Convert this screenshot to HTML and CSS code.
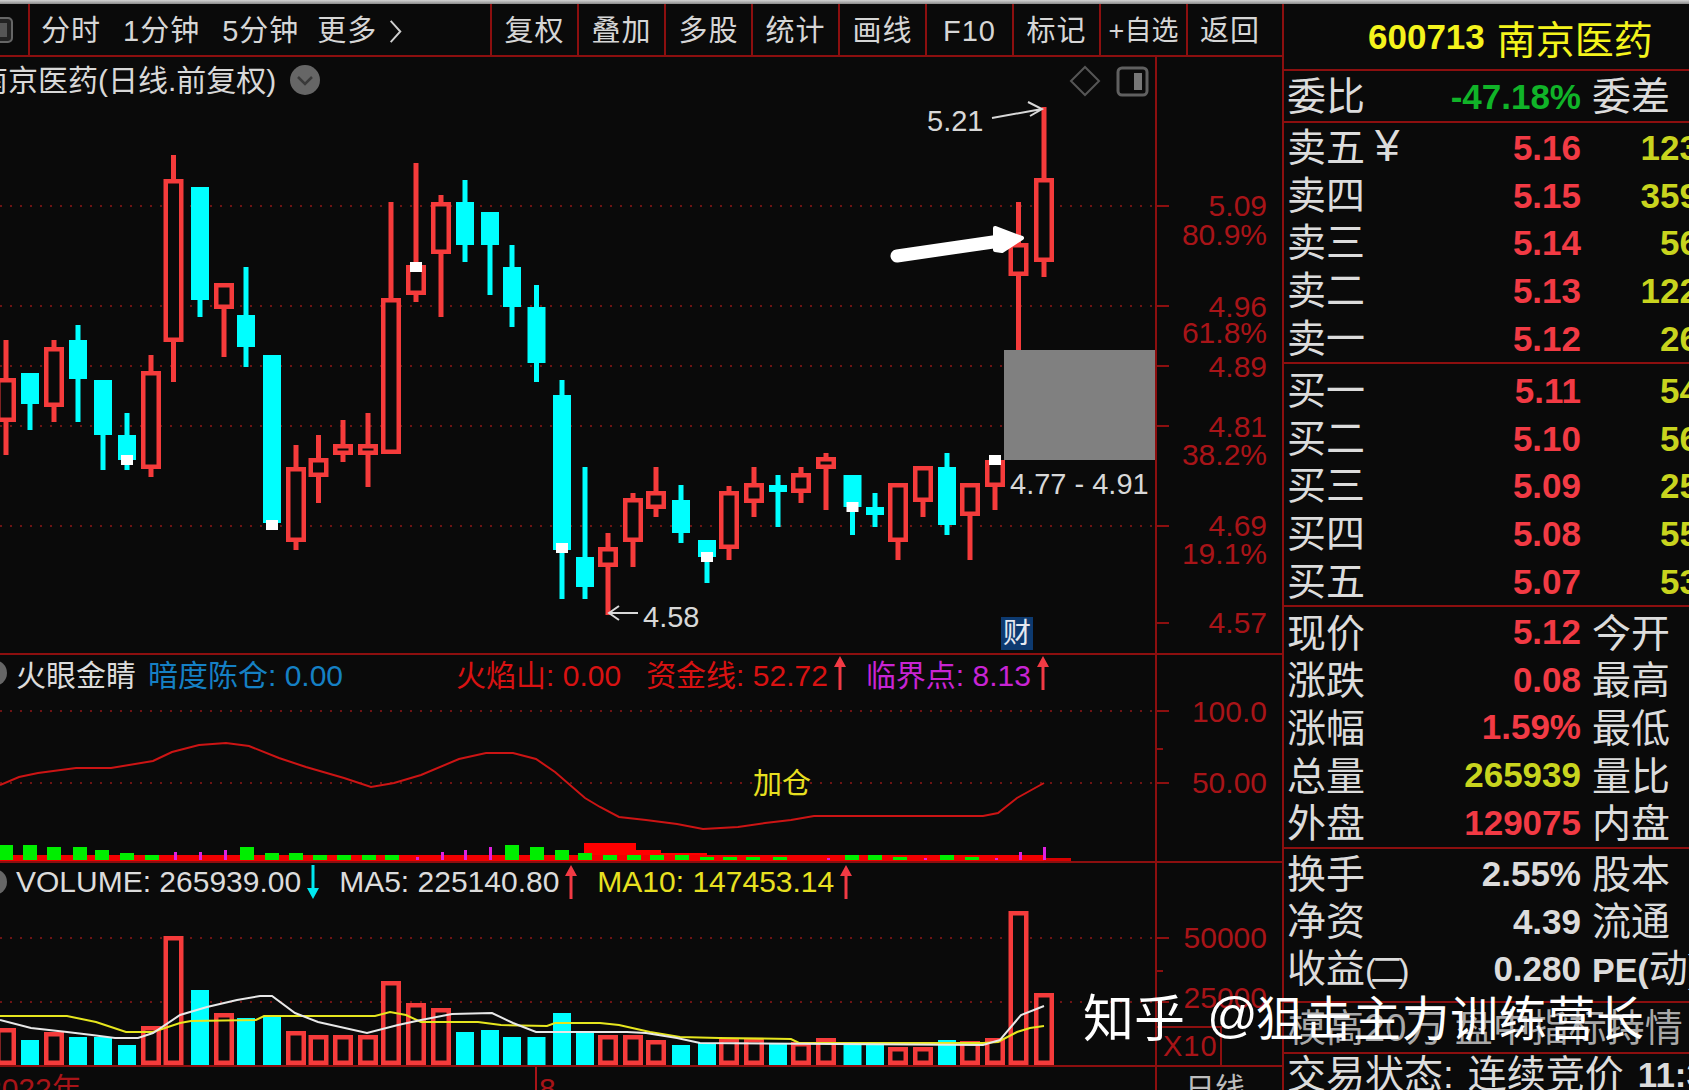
FILE: index.html
```html
<!DOCTYPE html>
<html lang="zh-CN">
<head>
  <meta charset="UTF-8">
  <title>南京医药 600713 日线</title>
  <link rel="stylesheet" href="styles.css">
</head>
<body>
  <div class="topline"></div>
  <div class="app">
    <div class="left">
      <div class="toolbar">
        <div class="tool-icon"><span class="tool-icon-box"></span></div>
        <div class="tabs">
          <span>分时</span>
          <span>1分钟</span>
          <span>5分钟</span>
          <span class="tab-more">更多 <svg class="more-arrow" viewBox="0 0 14 26"><path d="M2 2 L12 13 L2 24"/></svg></span>
        </div>
        <span class="tool-btn">复权</span>
        <span class="tool-btn">叠加</span>
        <span class="tool-btn">多股</span>
        <span class="tool-btn">统计</span>
        <span class="tool-btn">画线</span>
        <span class="tool-btn">F10</span>
        <span class="tool-btn">标记</span>
        <span class="tool-btn tight">+自选</span>
        <span class="tool-btn last">返回</span>
      </div>

      <div class="pane pane-main">
        <svg class="layer" id="mainLayer"></svg>
        <div class="plot">
          <div class="main-title">
            <span>南京医药(日线.前复权)</span>
            <span class="title-drop">
              <svg viewBox="0 0 30 30"><path d="M8 12 L15 19 L22 12"/></svg>
            </span>
          </div>
          <svg class="plot-icons" viewBox="-8 0 78 32">
            <path class="diamond" d="M-7 16 L7 2 L21 16 L7 30 Z"/>
            <rect class="panel-frame" x="40" y="3" width="29" height="27" rx="4"/>
            <rect class="panel-fill" x="56" y="8" width="8" height="17"/>
          </svg>
          <span class="cai-badge">财</span>
        </div>
        <div class="axis"></div>
      </div>

      <div class="pane pane-ind">
        <svg class="layer" id="indLayer"></svg>
        <div class="plot">
          <div class="legend legend-ind">
            <span class="legend-dot"></span>
            <span class="c-white">火眼金睛</span>
            <span class="c-blue close">暗度陈仓: 0.00</span>
            <span class="c-red far">火焰山: 0.00</span>
            <span class="c-red mid">资金线: 52.72</span>
            <svg class="arrow" viewBox="0 0 14 34"><path class="arrow-red" d="M7 0 L13 11 L8.5 11 L8.5 34 L5.5 34 L5.5 11 L1 11 Z"/></svg>
            <span class="c-magenta near">临界点: 8.13</span>
            <svg class="arrow" viewBox="0 0 14 34"><path class="arrow-red" d="M7 0 L13 11 L8.5 11 L8.5 34 L5.5 34 L5.5 11 L1 11 Z"/></svg>
          </div>
        </div>
        <div class="axis"></div>
      </div>

      <div class="pane pane-vol">
        <svg class="layer" id="volLayer"></svg>
        <div class="plot">
          <div class="legend legend-vol">
            <span class="legend-dot"></span>
            <span class="c-white">VOLUME: 265939.00</span>
            <svg class="arrow" viewBox="0 0 14 34"><path class="arrow-cyan" d="M7 34 L13 23 L8.5 23 L8.5 0 L5.5 0 L5.5 23 L1 23 Z"/></svg>
            <span class="c-white near">MA5: 225140.80</span>
            <svg class="arrow" viewBox="0 0 14 34"><path class="arrow-red" d="M7 0 L13 11 L8.5 11 L8.5 34 L5.5 34 L5.5 11 L1 11 Z"/></svg>
            <span class="c-yellow near">MA10: 147453.14</span>
            <svg class="arrow" viewBox="0 0 14 34"><path class="arrow-red" d="M7 0 L13 11 L8.5 11 L8.5 34 L5.5 34 L5.5 11 L1 11 Z"/></svg>
          </div>
        </div>
        <div class="axis">
          <div class="axis-x10">
            <span>X10</span>
          </div>
        </div>
      </div>

      <div class="date-row">
        <div class="dates">
          <span class="year">2022年</span>
          <span class="month">8</span>
        </div>
        <div class="period">日线</div>
      </div>
    </div>

    <div class="right">
      <div class="stock-head">
        <b>600713</b><span>南京医药</span>
      </div>

      <div class="section ratio">
        <div class="row">
          <span class="lbl">委比</span><b class="num c-green">-47.18%</b><span class="lbl">委差</span>
        </div>
      </div>

      <div class="section sell">
        <div class="row"><span class="lbl">卖五<i class="yen">¥</i></span><b class="num c-up">5.16</b><b class="num vol">123</b></div>
        <div class="row"><span class="lbl">卖四</span><b class="num c-up">5.15</b><b class="num vol">359</b></div>
        <div class="row"><span class="lbl">卖三</span><b class="num c-up">5.14</b><b class="num vol">56</b></div>
        <div class="row"><span class="lbl">卖二</span><b class="num c-up">5.13</b><b class="num vol">122</b></div>
        <div class="row"><span class="lbl">卖一</span><b class="num c-up">5.12</b><b class="num vol">26</b></div>
      </div>

      <div class="section buy">
        <div class="row"><span class="lbl">买一</span><b class="num c-up">5.11</b><b class="num vol">54</b></div>
        <div class="row"><span class="lbl">买二</span><b class="num c-up">5.10</b><b class="num vol">56</b></div>
        <div class="row"><span class="lbl">买三</span><b class="num c-up">5.09</b><b class="num vol">25</b></div>
        <div class="row"><span class="lbl">买四</span><b class="num c-up">5.08</b><b class="num vol">55</b></div>
        <div class="row"><span class="lbl">买五</span><b class="num c-up">5.07</b><b class="num vol">53</b></div>
      </div>

      <div class="section now">
        <div class="row"><span class="lbl">现价</span><b class="num c-up">5.12</b><span class="lbl">今开</span></div>
        <div class="row"><span class="lbl">涨跌</span><b class="num c-up">0.08</b><span class="lbl">最高</span></div>
        <div class="row"><span class="lbl">涨幅</span><b class="num c-up">1.59%</b><span class="lbl">最低</span></div>
        <div class="row"><span class="lbl">总量</span><b class="num vol">265939</b><span class="lbl">量比</span></div>
        <div class="row"><span class="lbl">外盘</span><b class="num c-up">129075</b><span class="lbl">内盘</span></div>
      </div>

      <div class="section stats">
        <div class="row"><span class="lbl">换手</span><b class="num c-plain">2.55%</b><span class="lbl">股本</span></div>
        <div class="row"><span class="lbl">净资</span><b class="num c-plain">4.39</b><span class="lbl">流通</span></div>
        <div class="row"><span class="lbl">收益<span class="narrow">(二)</span></span><b class="num c-plain">0.280</b><span class="lbl"><b class="pe">PE(</b>动)</span></div>
      </div>

      <div class="section note">模高20万 盘中指标持情</div>

      <div class="status"><span>交易状态:</span> <span>连续竞价</span> <b>11:30</b></div>
    </div>
  </div>

  <div class="watermark">
    <span class="wm-zhi">知乎</span>
    <span class="wm-at">@</span>
    <span class="wm-name">狙击主力训练营长</span>
  </div>

  <script src="chart.js"></script>
</body>
</html>
```

FILE: styles.css
```css
:root {
  --bg: #0a0a0a;
  --line: #8c0f0f;
  --grid: #6e1414;
  --up: #f23a44;
  --axis-text: #a81418;
  --label: #dcdcdc;
  --vol: #c8d41e;
}

* {
  box-sizing: border-box;
}

html, body {
  margin: 0;
  height: 100%;
}

body {
  position: relative;
  width: 1689px;
  height: 1090px;
  overflow: hidden;
  background: var(--bg);
  color: var(--label);
  font-family: "Liberation Sans", "Noto Sans CJK SC", sans-serif;
}

.topline {
  height: 4px;
  background: linear-gradient(#d4d4d4, #8a8a8a);
}

.app {
  display: flex;
  height: 1086px;
}

.left {
  width: 1282px;
  display: flex;
  flex-direction: column;
}

/* toolbar */
.toolbar {
  height: 53px;
  flex: none;
  display: flex;
  align-items: stretch;
  border-bottom: 2px solid var(--line);
  font-size: 29px;
  line-height: 54px;
  letter-spacing: 1px;
  color: #d6d6d6;
}

.tool-icon {
  width: 30px;
  border-right: 2px solid var(--line);
  overflow: hidden;
  display: flex;
  align-items: center;
}

.tool-icon-box {
  display: block;
  width: 28px;
  height: 26px;
  margin-left: -15px;
  border: 2px solid #666;
  border-radius: 5px;
  background: #555;
  box-shadow: inset 0 0 0 4px #222;
}

.tabs {
  width: 462px;
  display: flex;
  gap: 22px;
  padding-left: 11px;
  border-right: 2px solid var(--line);
}

.tab-more {
  margin-left: -4px;
}

.more-arrow {
  width: 15px;
  height: 25px;
  margin-left: 2px;
  fill: none;
  stroke: #cfcfcf;
  stroke-width: 2;
  vertical-align: -3px;
}

.tool-btn {
  width: 87px;
  text-align: center;
  border-right: 2px solid var(--line);
}

.tool-btn.last {
  flex: 1;
  border-right: none;
  padding-right: 10px;
}

.tool-btn.tight {
  white-space: nowrap;
  font-size: 27px;
  letter-spacing: 0;
}

/* chart panes */
.pane {
  position: relative;
  display: flex;
  flex: none;
  border-bottom: 2px solid var(--line);
}

.pane-main { height: 598px; }
.pane-ind { height: 208px; }
.pane-vol { height: 204px; }

.plot {
  position: relative;
  width: 1155px;
  overflow: hidden;
}

.axis {
  position: relative;
  flex: 1;
  border-left: 2px solid var(--line);
}

.layer {
  position: absolute;
  left: 0;
  top: 0;
  width: 1282px;
  height: 100%;
}

.main-title {
  position: relative;
  display: flex;
  align-items: center;
  gap: 14px;
  height: 42px;
  margin-left: -22px;
  font-size: 30px;
  white-space: nowrap;
  color: #d8d8d8;
}

.title-drop {
  width: 30px;
  height: 30px;
  margin-top: 4px;
  border-radius: 50%;
  background: #666;
}

.title-drop svg {
  display: block;
  fill: none;
  stroke: #3a3a3a;
  stroke-width: 2.5;
}

.plot-icons {
  position: absolute;
  right: 7px;
  top: 8px;
  width: 78px;
  height: 32px;
  fill: none;
  overflow: visible;
}

.diamond {
  stroke: #555;
  stroke-width: 2;
}

.panel-frame {
  stroke: #606060;
  stroke-width: 3;
}

.panel-fill {
  fill: #777;
}

.cai-badge {
  position: absolute;
  left: 1001px;
  top: 560px;
  width: 32px;
  height: 33px;
  background: #0d3a70;
  color: #e4e8f0;
  font-size: 28px;
  line-height: 33px;
  text-align: center;
}

.legend {
  position: relative;
  display: flex;
  align-items: center;
  font-size: 30px;
  white-space: nowrap;
}

.legend-ind { height: 36px; }
.legend-vol { height: 38px; }

.legend .close { margin-left: 12px; }
.legend .far { margin-left: 113px; }
.legend .mid { margin-left: 25px; }
.legend .near { margin-left: 19px; }

.legend-dot {
  flex: none;
  width: 26px;
  height: 26px;
  margin-left: -19px;
  margin-right: 9px;
  border-radius: 50%;
  background: #666;
}

.arrow {
  flex: none;
  width: 14px;
  height: 34px;
  margin-left: 5px;
}

.arrow-red { fill: var(--up); }
.arrow-cyan { fill: #00e8f0; }

.c-white { color: #dcdcdc; }
.c-blue { color: #1580c4; }
.c-red { color: #d81212; }
.c-magenta { color: #c824d4; }
.c-yellow { color: #e8e020; }
.c-green { color: #10b428; }
.c-up { color: var(--up); }
.c-plain { color: #dcdcdc; }

.axis-x10 {
  position: absolute;
  left: 0;
  top: 163px;
  width: 65px;
  height: 39px;
  border-top: 2px solid var(--line);
  border-right: 2px solid var(--line);
  color: var(--axis-text);
  font-size: 29px;
  line-height: 36px;
  padding-left: 6px;
  letter-spacing: 1px;
}

.date-row {
  flex: 1;
  display: flex;
  overflow: hidden;
}

.dates {
  position: relative;
  width: 1155px;
  color: var(--axis-text);
  font-size: 30px;
  line-height: 44px;
  overflow: hidden;
}

.year {
  position: absolute;
  left: -15px;
  top: 0;
}

.month {
  position: absolute;
  left: 535px;
  top: 0;
  padding-left: 2px;
  border-left: 2px solid var(--axis-text);
}

.period {
  flex: 1;
  border-left: 2px solid var(--line);
  padding-left: 28px;
  font-size: 30px;
  line-height: 44px;
  color: #bdbdbd;
}

/* quote panel */
.right {
  width: 407px;
  border-left: 2px solid var(--line);
  overflow: hidden;
  display: flex;
  flex-direction: column;
}

.stock-head {
  height: 67px;
  flex: none;
  display: flex;
  align-items: center;
  gap: 12px;
  padding-left: 84px;
  border-bottom: 2px solid var(--line);
  color: #f4f41c;
  white-space: nowrap;
}

.stock-head b {
  font-size: 35px;
}

.stock-head span {
  font-size: 39px;
}

.section {
  flex: none;
  border-bottom: 2px solid var(--line);
}

.ratio { height: 52px; }
.ratio .row { height: 50px; grid-template-rows: 50px; }
.sell { padding-top: 1px; height: 241px; }
.buy { padding-top: 3px; height: 243px; }
.now { padding-top: 1px; height: 242px; }
.stats { padding-top: 1px; height: 154px; }

.now .lbl {
  padding-top: 3px;
}

.stats .lbl {
  padding-top: 1px;
}

.note {
  height: 51px;
  padding-left: 4px;
  font-size: 38px;
  line-height: 50px;
  white-space: nowrap;
  color: #a8a8a8;
}

.row {
  display: grid;
  grid-template-columns: 96px 183px 105px;
  grid-template-rows: 47.6px;
  column-gap: 13px;
  align-items: center;
  height: 47.6px;
  padding-left: 3px;
  white-space: nowrap;
}

.lbl {
  font-size: 39px;
  line-height: 47px;
  color: var(--label);
}

.num {
  margin-right: -2px;
  font-size: 35px;
  line-height: 47px;
  text-align: right;
}

.vol { color: var(--vol); }

.yen {
  margin-left: 10px;
  font-style: normal;
  font-size: 44px;
  line-height: 40px;
}

.narrow {
  font-size: 34px;
  letter-spacing: -6px;
}

.pe {
  font-size: 34px;
}

.status {
  display: flex;
  gap: 14px;
  padding-left: 3px;
  font-size: 39px;
  line-height: 42px;
  white-space: nowrap;
}

.status b {
  font-size: 35px;
}

/* chart drawing */
.txt-axis {
  fill: var(--axis-text);
  font-size: 30px;
  text-anchor: end;
  dominant-baseline: central;
}

.txt-note {
  fill: #d8d8d8;
  font-size: 29px;
  dominant-baseline: central;
}

.txt-add {
  fill: #e8e020;
  font-size: 29px;
  dominant-baseline: central;
}

.watermark {
  position: absolute;
  left: 1083px;
  top: 983px;
  display: flex;
  align-items: center;
  height: 64px;
  color: #fff;
  white-space: nowrap;
  font-family: "Noto Sans CJK SC", sans-serif;
}

.wm-zhi {
  font-size: 51px;
}

.wm-at {
  margin-left: 22px;
  font-size: 50px;
  font-family: "Liberation Sans", sans-serif;
}

.wm-name {
  margin-left: -2px;
  font-size: 48px;
  letter-spacing: 0.6px;
}
```

FILE: chart.js
```js
const RED = '#f53b3b';
const CYAN = '#00ffff';
const GRID = '#6e1414';
const LINE = '#8c0f0f';

// x, high, body top, body bottom, low, colour, white close marker y
const candles = [
  [6, 340, 378, 422, 455, 'r'],
  [30, 373, 373, 404, 430, 'c'],
  [54, 340, 347, 407, 422, 'r'],
  [78, 325, 340, 379, 422, 'c'],
  [103, 380, 380, 435, 470, 'c'],
  [127, 413, 435, 460, 470, 'c', 460],
  [151, 355, 371, 469, 477, 'r'],
  [173.5, 155, 179, 342, 382, 'r'],
  [200, 187, 187, 300, 317, 'c'],
  [224, 283, 283, 309, 357, 'r'],
  [246, 267, 315, 347, 367, 'c'],
  [272, 355, 355, 523, 523, 'c', 525],
  [296, 445, 467, 542, 550, 'r'],
  [318.5, 435, 458, 477, 503, 'r'],
  [343, 420, 444, 455, 462, 'r'],
  [368, 413, 444, 455, 487, 'r'],
  [391, 202, 298, 454, 454, 'r'],
  [416, 163, 265, 295, 302, 'r', 267],
  [441, 195, 202, 254, 317, 'r'],
  [465, 180, 202, 245, 262, 'c'],
  [490, 212, 212, 245, 295, 'c'],
  [512, 245, 267, 307, 327, 'c'],
  [536.5, 285, 307, 363, 382, 'c'],
  [562, 380, 395, 550, 599, 'c', 548],
  [585, 467, 557, 587, 599, 'c'],
  [608, 533, 547, 567, 615, 'r'],
  [633, 493, 498, 542, 567, 'r'],
  [656, 467, 491, 509, 517, 'r'],
  [681, 485, 500, 533, 543, 'c'],
  [707, 540, 540, 557, 583, 'c', 557],
  [729, 486, 491, 549, 560, 'r'],
  [754, 467, 483, 503, 517, 'r'],
  [778, 475, 485, 492, 527, 'c'],
  [801, 467, 473, 493, 503, 'r'],
  [826, 453, 457, 469, 510, 'r'],
  [852.5, 475, 475, 507, 535, 'c', 507],
  [875, 493, 507, 515, 527, 'c'],
  [898, 483, 483, 542, 560, 'r'],
  [923, 466, 466, 502, 517, 'r'],
  [947, 453, 467, 525, 535, 'c'],
  [970, 483, 483, 516, 560, 'r'],
  [995, 460, 460, 487, 510, 'r', 460],
  [1018.5, 202, 243, 276, 350, 'r'],
  [1044, 107, 178, 262, 277, 'r']
];

// top of each volume bar, same order as candles
const volumeTops = [
  1028, 1040, 1032, 1037, 1037, 1045, 1026, 936, 990, 1013, 1018, 1017, 1031, 1035, 1035,
  1035, 981, 1003, 1008, 1032, 1030, 1037, 1037, 1013, 1032, 1035, 1035, 1040, 1045, 1043,
  1038, 1038, 1043, 1042, 1038, 1043, 1043, 1047, 1047, 1040, 1041, 1038, 911, 993
];

// x, top, colour of the small bars in the indicator pane
const indBars = [
  [6, 845, 'g'], [30, 845, 'g'], [54, 847, 'g'], [80, 847, 'g'], [102, 850, 'g'], [127, 853, 'g'],
  [152, 855, 'g'], [175, 852, 'm'], [200, 852, 'm'], [225, 850, 'm'], [247, 847, 'g'],
  [272, 853, 'g'], [296, 853, 'g'], [320, 855, 'g'], [344, 855, 'g'], [369, 855, 'g'],
  [392, 855, 'g'], [417, 857, 'm'], [442, 852, 'm'], [465, 850, 'm'], [490, 847, 'm'],
  [512, 845, 'g'], [537, 847, 'g'], [562, 850, 'g'], [585, 853, 'g'], [610, 855, 'g'],
  [634, 855, 'g'], [657, 855, 'g'], [682, 855, 'g'], [707, 857, 'g'], [730, 857, 'g'],
  [753, 857, 'g'], [780, 857, 'g'], [828, 858, 'm'], [852, 855, 'g'], [875, 855, 'g'],
  [900, 857, 'g'], [925, 858, 'm'], [947, 855, 'g'], [972, 857, 'g'], [996, 858, 'm'],
  [1020, 852, 'm'], [1044, 847, 'm']
];

const fundLine = [[0,785],[19,777],[38,773],[76,768],[111,768],[153,761],[172,752],[199,745],[226,743],[249,746],[279,758],[306,767],[344,778],[371,787],[394,783],[421,775],[459,759],[486,753],[513,753],[536,759],[555,772],[585,798],[600,807],[619,817],[646,820],[677,824],[703,829],[738,827],[765,823],[791,820],[814,816],[983,816],[998,813],[1017,798],[1044,783]];

const ma5Line = [[0,1020],[31,1028],[67,1032],[92,1035],[115,1038],[138,1038],[153,1033],[180,1015],[207,1007],[237,1000],[260,996],[272,996],[295,1013],[318,1022],[367,1033],[398,1025],[421,1020],[452,1014],[492,1013],[513,1023],[536,1032],[627,1032],[646,1033],[677,1038],[700,1043],[983,1045],[1000,1040],[1021,1015],[1044,1006]];

const ma10Line = [[0,1016],[67,1016],[96,1022],[126,1032],[153,1032],[180,1023],[191,1021],[256,1020],[264,1016],[375,1016],[390,1012],[406,1015],[421,1022],[478,1022],[501,1025],[547,1026],[555,1023],[600,1023],[619,1025],[650,1032],[680,1037],[719,1038],[791,1039],[799,1043],[983,1043],[998,1042],[1017,1032],[1030,1028],[1044,1026]];

function rect(x, y, w, h, fill) {
  return `<rect x="${x}" y="${y}" width="${w}" height="${h}" fill="${fill}"/>`;
}

function hollow(x, y, w, h) {
  return `<rect x="${x + 2.25}" y="${y + 2.25}" width="${w - 4.5}" height="${h - 4.5}" fill="#0a0a0a" stroke="${RED}" stroke-width="4.5"/>`;
}

function poly(points, color, width) {
  return `<polyline points="${points.join(' ')}" fill="none" stroke="${color}" stroke-width="${width}"/>`;
}

function dotted(y) {
  return `<line x1="0" x2="1155" y1="${y}" y2="${y}" stroke="${GRID}" stroke-width="2" stroke-dasharray="2 8"/>` +
    rect(1155, y - 1, 14, 2, LINE);
}

function text(x, y, value, cls) {
  return `<text x="${x}" y="${y}" class="${cls}">${value}</text>`;
}

function drawMain() {
  let out = '';
  [206, 306, 366, 426, 526].forEach(y => { out += dotted(y); });
  out += rect(1155, 622, 14, 2, LINE);
  out += rect(1004, 350, 151, 110, '#808080');

  candles.forEach(c => {
    const [x, hi, top, bot, lo, color, mark] = c;
    const fill = color === 'r' ? RED : CYAN;
    out += rect(x - 2.5, hi, 5, lo - hi, fill);
    if (color === 'r') {
      out += hollow(x - 10, top, 20, Math.max(bot - top, 9));
    } else {
      out += rect(x - 9, top, 18, Math.max(bot - top, 4), fill);
    }
    if (mark) out += rect(x - 6, mark - 5, 12, 10, '#fff');
  });

  // axis values
  [[205, '5.09'], [234, '80.9%'], [306, '4.96'], [332, '61.8%'], [366, '4.89'], [426, '4.81'],
   [454, '38.2%'], [525, '4.69'], [553, '19.1%'], [622, '4.57']].forEach(l => {
    out += text(1267, l[0], l[1], 'txt-axis');
  });

  // high and low notes
  out += text(927, 121, '5.21', 'txt-note');
  out += `<path d="M992 118 L1042 109 M1028 102 L1042 109 L1030 116" fill="none" stroke="#d8d8d8" stroke-width="2"/>`;
  out += text(643, 617, '4.58', 'txt-note');
  out += `<path d="M638 613 L609 613 M619 606 L609 613 L619 620" fill="none" stroke="#d8d8d8" stroke-width="2"/>`;
  out += text(1010, 484, '4.77 - 4.91', 'txt-note');

  // hand drawn arrow
  out += `<path d="M897 256 L1000 241" fill="none" stroke="#fff" stroke-width="13" stroke-linecap="round"/>`;
  out += `<path d="M995 228 L1022 238 L1002 251 L995 250 Z" fill="#fff" stroke="#fff" stroke-width="4" stroke-linejoin="round"/>`;
  return out;
}

function drawInd() {
  let out = '';
  [711, 783].forEach(y => { out += dotted(y); });
  out += rect(1155, 748, 8, 2, LINE);
  out += poly(fundLine, '#cc1414', 2);
  out += text(753, 784, '加仓', 'txt-add');
  [[711, '100.0'], [782, '50.00']].forEach(l => { out += text(1267, l[0], l[1], 'txt-axis'); });

  // red block and band
  out += rect(584, 843, 52, 18, '#ff0000');
  out += rect(636, 850, 25, 11, '#ff0000');
  out += rect(661, 853, 46, 8, '#ff0000');
  out += rect(0, 855, 1044, 6, '#f00000');
  out += rect(1044, 858, 27, 3, '#d80000');

  indBars.forEach(b => {
    if (b[2] === 'g') {
      out += rect(b[0] - 7, b[1], 14, 860 - b[1], '#00ee00');
    } else {
      out += rect(b[0] - 1, b[1], 3, 860 - b[1], '#e020e0');
    }
  });
  return out;
}

function drawVol() {
  let out = '';
  [938, 1002].forEach(y => { out += dotted(y); });
  out += rect(1155, 970, 8, 2, LINE);
  candles.forEach((c, i) => {
    const top = volumeTops[i];
    if (c[5] === 'r') {
      out += hollow(c[0] - 10, top, 20, 1065 - top);
    } else {
      out += rect(c[0] - 9, top, 18, 1065 - top, CYAN);
    }
  });
  out += poly(ma10Line, '#e6e61e', 2);
  out += poly(ma5Line, '#e8e8e8', 2);
  [[937, '50000'], [997, '25000']].forEach(l => { out += text(1267, l[0], l[1], 'txt-axis'); });
  return out;
}

function mount(id, top, height, content) {
  const svg = document.getElementById(id);
  svg.setAttribute('viewBox', `0 ${top} 1282 ${height}`);
  svg.innerHTML = content;
}

mount('mainLayer', 57, 596, drawMain());
mount('indLayer', 655, 206, drawInd());
mount('volLayer', 863, 202, drawVol());
```
